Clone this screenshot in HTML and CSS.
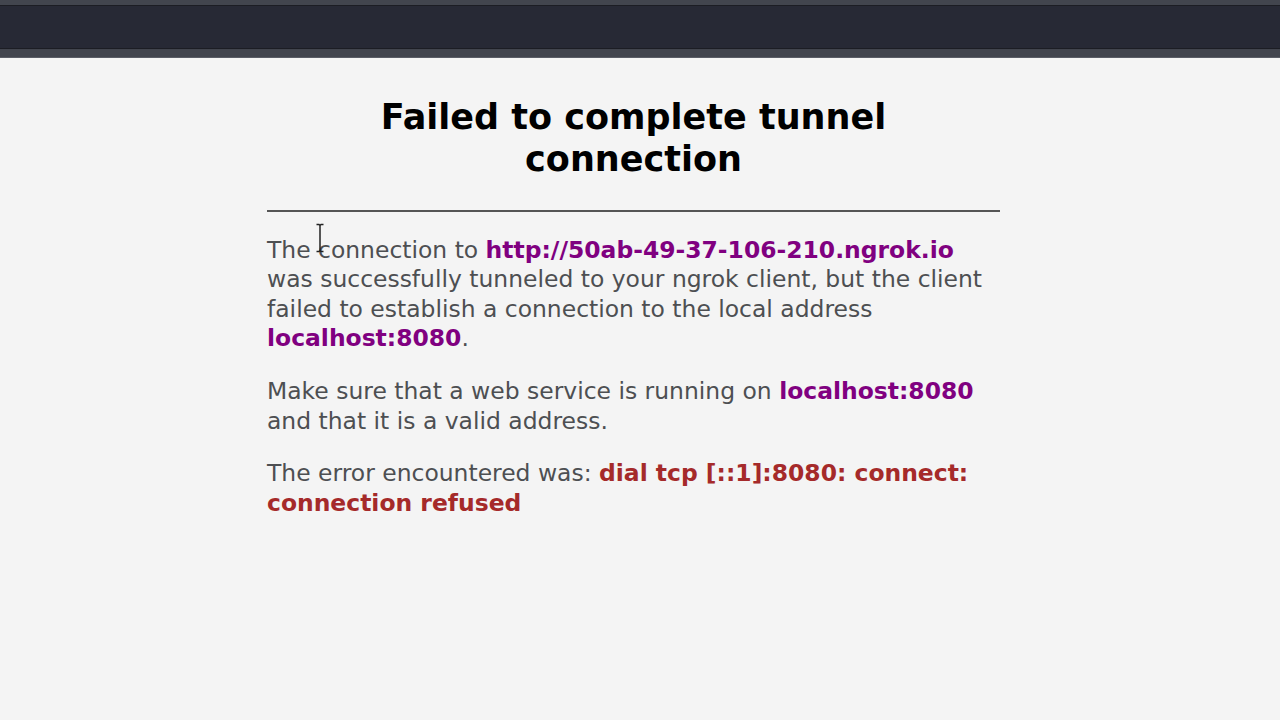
FILE: index.html
```html
<!DOCTYPE html>
<html>
<head>
<meta charset="utf-8">
<link rel="stylesheet" href="styles.css">
</head>
<body>
<div class="topbar"><div class="topbar-inner"></div></div>
<main class="content">
  <h1 class="title">Failed to complete tunnel connection</h1>
  <hr class="rule">
  <p class="para">The connection to <strong class="link">http://50ab-49-37-106-210.ngrok.io</strong> was successfully tunneled to your ngrok client, but the client failed to establish a connection to the local address <strong class="link">localhost:8080</strong>.</p>
  <p class="para">Make sure that a web service is running on <strong class="link">localhost:8080</strong> and that it is a valid address.</p>
  <p class="para">The error encountered was: <strong class="err">dial tcp [::1]:8080: connect: connection refused</strong></p>
  <svg class="cursor" width="10" height="30" viewBox="0 0 10 30"><path d="M1.5 1.5h2.5l1 1 1-1h2.5M5 2.5v25M1.5 28.5h2.5l1-1 1 1h2.5" fill="none" stroke="#222" stroke-width="1.5"/></svg>
</main>
</body>
</html>
```
FILE: styles.css
```css
html, body {
  margin: 0;
  padding: 0;
  background: #f4f4f4;
  font-family: "DejaVu Sans", sans-serif;
}
.topbar {
  height: 58px;
  background: #42454e;
  border-bottom: 1px solid #5a5d66;
  box-sizing: border-box;
  padding-top: 5px;
}
.topbar-inner {
  height: 44px;
  background: #272935;
  border-top: 1px solid #1c1d24;
  border-bottom: 1px solid #1c1d24;
  box-sizing: border-box;
}
.content {
  position: relative;
  width: 733px;
  margin-left: 267px;
  padding-top: 38px;
}
.title {
  margin: 0;
  text-align: center;
  font-size: 35px;
  line-height: 42px;
  font-weight: bold;
  color: #000;
}
.rule {
  margin: 30px 0 24px;
  border: 0;
  height: 2px;
  background: #555;
}
.para {
  margin: 0 0 23.5px;
  font-size: 23.45px;
  line-height: 29.4px;
  color: #4d4f52;
}
.link {
  color: #800080;
}
.err {
  color: #a52a2a;
}
.cursor {
  position: absolute;
  left: 48px;
  top: 165px;
}
```
